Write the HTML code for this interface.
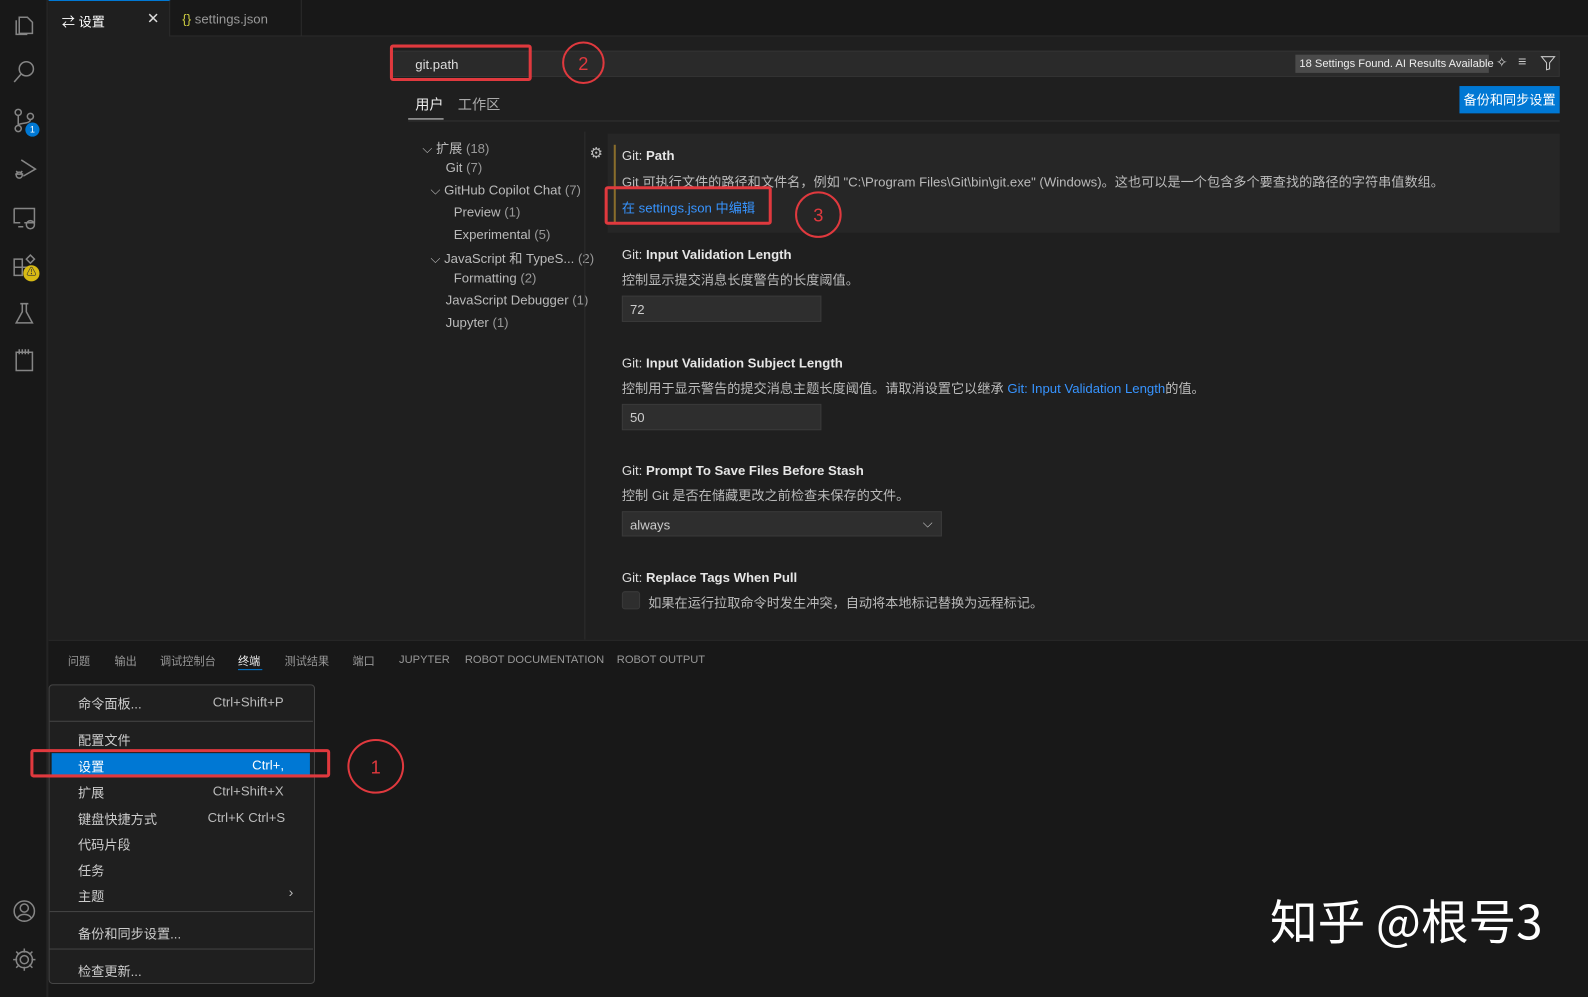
<!DOCTYPE html>
<html><head><meta charset="utf-8"><style>
*{margin:0;padding:0;box-sizing:border-box}
html,body{width:1588px;height:985px;overflow:hidden;background:#1f1f1f}
#w{position:absolute;left:0;top:0;width:1568px;height:973px;transform:scale(1.0128,1.0123);transform-origin:0 0;font-family:"Liberation Sans","Noto Sans CJK SC",sans-serif;color:#ccc;font-size:13px}
.a{position:absolute}
.t{position:absolute;white-space:nowrap}
.ico{position:absolute;left:11px;width:26px;height:26px;fill:none;stroke:#858585;stroke-width:1.5}
.red{position:absolute;border:3px solid #e0393e;border-radius:3px}
.circ{position:absolute;border:2px solid #e0393e;border-radius:50%;color:#e0393e;font-size:18px;text-align:center}
.mi{position:absolute;left:77px;font-size:13px;color:#ccc}
.ms{position:absolute;font-size:13px;color:#bbb}
.sep{position:absolute;left:49px;width:260px;height:1px;background:#454545}
.title{position:absolute;left:614px;font-size:13px;color:#ddd}
.title b{font-weight:bold;color:#e6e6e6}
.desc{position:absolute;left:614px;font-size:13px;color:#bbb}
.inp{position:absolute;left:614px;width:197px;height:26px;background:#2e2e2e;border:1px solid #3a3a3a;color:#ccc;padding:5px 7px;font-size:13px}
.toc{position:absolute;font-size:13px;color:#bbb}
.toc i{font-style:normal;color:#999}
</style></head><body><div id="w">
<div class="a" style="left:0;top:0;width:47px;height:985px;background:#181818;border-right:1px solid #2b2b2b"></div>
<svg class="ico" style="top:11px" viewBox="0 0 26 26"><path d="M8 6h8l5 5v11H8z M5 9v14h11"/></svg>
<svg class="ico" style="top:58px" viewBox="0 0 26 26"><circle cx="15" cy="10" r="7"/><path d="M10 15 3 23"/></svg>
<svg class="ico" style="top:106px" viewBox="0 0 26 26"><circle cx="7" cy="5" r="3"/><circle cx="7" cy="21" r="3"/><circle cx="19" cy="9" r="3"/><path d="M7 8v10M19 12c0 5-12 3-12 6"/></svg>
<div class="a" style="left:25px;top:121px;width:14px;height:14px;border-radius:50%;background:#0078d4;color:#fff;font-size:9px;text-align:center;line-height:14px">1</div>
<svg class="ico" style="top:154px" viewBox="0 0 26 26"><path d="M10 4 24 13 12 20M4 18h8M5 15l2 2M11 15l-2 2"/><circle cx="8" cy="19" r="3"/></svg>
<svg class="ico" style="top:202px" viewBox="0 0 26 26"><path d="M3 4h20v14H13M3 4v14h6M7 22h5"/><circle cx="19" cy="20" r="4"/></svg>
<svg class="ico" style="top:250px" viewBox="0 0 26 26"><path d="M3 6h8v8H3zM3 14h8v8H3zM11 14h8v8"/><path d="M15 6l4-4 4 4-4 4z"/></svg>
<div class="a" style="left:23px;top:262px;width:16px;height:16px;border-radius:50%;background:#d7ba14;color:#333;font-size:10px;text-align:center;line-height:16px">⚠</div>
<svg class="ico" style="top:297px" viewBox="0 0 26 26"><path d="M9 3h8M11 3v8L5 22h16L15 11V3"/></svg>
<svg class="ico" style="top:343px" viewBox="0 0 26 26"><path d="M5 5h16v18H5zM8 2v5M11 2v5M14 2v5M17 2v5"/></svg>
<svg class="ico" style="top:887px" viewBox="0 0 26 26"><circle cx="13" cy="13" r="10"/><circle cx="13" cy="10" r="4"/><path d="M6 20c3-5 11-5 14 0"/></svg>
<svg class="ico" style="top:935px" viewBox="0 0 26 26"><circle cx="13" cy="13" r="4"/><path d="M13 2v4M13 20v4M2 13h4M20 13h4M5 5l3 3M18 18l3 3M5 21l3-3M18 8l3-3"/><circle cx="13" cy="13" r="8"/></svg>
<div class="a" style="left:48px;top:0;width:1540px;height:36px;background:#181818;border-bottom:1px solid #2b2b2b"></div>
<div class="a" style="left:48px;top:0;width:120px;height:36px;background:#1f1f1f;border-top:1px solid #0078d4;border-right:1px solid #2b2b2b"></div>
<div class="t" style="left:61px;top:11px;color:#fff;font-size:13px">⇄ 设置</div>
<div class="t" style="left:145px;top:9px;color:#ddd;font-size:15px">✕</div>
<div class="a" style="left:168px;top:0;width:130px;height:36px;border-right:1px solid #2b2b2b"></div>
<div class="t" style="left:180px;top:11px;color:#999;font-size:13px"><span style="color:#cbcb41">{}</span> settings.json</div>
<div class="a" style="left:385px;top:50px;width:1155px;height:26px;background:#2a2a2a;border:1px solid #333"></div>
<div class="t" style="left:410px;top:56px;color:#ddd;font-size:13px">git.path</div>
<div class="a" style="left:1279px;top:54px;width:191px;height:18px;background:#4a4a4a"></div>
<div class="t" style="left:1283px;top:57px;color:#eee;font-size:11px">18 Settings Found. AI Results Available</div>
<div class="t" style="left:1477px;top:53px;color:#ccc;font-size:14px">✧</div>
<div class="t" style="left:1499px;top:52px;color:#ccc;font-size:14px">≡</div>
<svg class="a" style="left:1521px;top:55px" width="15" height="15" viewBox="0 0 15 15"><path d="M1 1h13L9 7v6L6 14V7z" fill="none" stroke="#ccc"/></svg>
<div class="red" style="left:385px;top:44px;width:140px;height:36px"></div>
<div class="circ" style="left:555px;top:41px;width:42px;height:42px;line-height:40px">2</div>
<div class="t" style="left:410px;top:93px;color:#eee;font-size:14px">用户</div>
<div class="t" style="left:452px;top:93px;color:#aaa;font-size:14px">工作区</div>
<div class="a" style="left:403px;top:117px;width:35px;height:1px;background:#ddd"></div>
<div class="a" style="left:403px;top:119px;width:1137px;height:1px;background:#333"></div>
<div class="a" style="left:1441px;top:85px;width:99px;height:27px;background:#0078d4;color:#fff;font-size:13px;line-height:27px;text-align:center">备份和同步设置</div>
<div class="toc" style="left:417px;top:136px">⌵ 扩展 <i>(18)</i></div>
<div class="toc" style="left:440px;top:158px">Git <i>(7)</i></div>
<div class="toc" style="left:425px;top:180px">⌵ GitHub Copilot Chat <i>(7)</i></div>
<div class="toc" style="left:448px;top:202px">Preview <i>(1)</i></div>
<div class="toc" style="left:448px;top:224px">Experimental <i>(5)</i></div>
<div class="toc" style="left:425px;top:245px">⌵ JavaScript 和 TypeS... <i>(2)</i></div>
<div class="toc" style="left:448px;top:267px">Formatting <i>(2)</i></div>
<div class="toc" style="left:440px;top:289px">JavaScript Debugger <i>(1)</i></div>
<div class="toc" style="left:440px;top:311px">Jupyter <i>(1)</i></div>
<div class="a" style="left:577px;top:130px;width:1px;height:502px;background:#2e2e2e"></div>
<div class="a" style="left:600px;top:132px;width:940px;height:98px;background:#262626"></div>
<div class="a" style="left:606px;top:143px;width:2px;height:78px;background:#8a6d2b"></div>
<div class="t" style="left:582px;top:142px;color:#bbb;font-size:15px">⚙</div>
<div class="title" style="top:146px">Git: <b>Path</b></div>
<div class="desc" style="top:169px">Git 可执行文件的路径和文件名，例如 "C:\Program Files\Git\bin\git.exe" (Windows)。这也可以是一个包含多个要查找的路径的字符串值数组。</div>
<div class="t" style="left:614px;top:195px;color:#3794ff;font-size:13px">在 settings.json 中编辑</div>
<div class="red" style="left:597px;top:184px;width:165px;height:38px"></div>
<div class="circ" style="left:785px;top:189px;width:46px;height:46px;line-height:44px">3</div>
<div class="title" style="top:244px">Git: <b>Input Validation Length</b></div>
<div class="desc" style="top:266px">控制显示提交消息长度警告的长度阈值。</div>
<div class="inp" style="top:292px">72</div>
<div class="title" style="top:351px">Git: <b>Input Validation Subject Length</b></div>
<div class="desc" style="top:373px">控制用于显示警告的提交消息主题长度阈值。请取消设置它以继承 <span style="color:#3794ff">Git: Input Validation Length</span>的值。</div>
<div class="inp" style="top:399px">50</div>
<div class="title" style="top:457px">Git: <b>Prompt To Save Files Before Stash</b></div>
<div class="desc" style="top:479px">控制 Git 是否在储藏更改之前检查未保存的文件。</div>
<div class="inp" style="top:505px;width:316px;height:25px">always<span style="position:absolute;right:8px;top:3px">⌵</span></div>
<div class="title" style="top:563px">Git: <b>Replace Tags When Pull</b></div>
<div class="a" style="left:614px;top:584px;width:18px;height:18px;background:#2e2e2e;border:1px solid #3a3a3a;border-radius:3px"></div>
<div class="desc" style="left:640px;top:585px">如果在运行拉取命令时发生冲突，自动将本地标记替换为远程标记。</div>
<div class="a" style="left:48px;top:632px;width:1540px;height:353px;background:#181818;border-top:1px solid #2b2b2b"></div>
<div class="t" style="left:67px;top:645px;font-size:11px;color:#999">问题</div>
<div class="t" style="left:113px;top:645px;font-size:11px;color:#999">输出</div>
<div class="t" style="left:158px;top:645px;font-size:11px;color:#999">调试控制台</div>
<div class="t" style="left:235px;top:645px;font-size:11px;color:#eee">终端</div>
<div class="a" style="left:235px;top:661px;width:24px;height:1px;background:#0078d4"></div>
<div class="t" style="left:281px;top:645px;font-size:11px;color:#999">测试结果</div>
<div class="t" style="left:348px;top:645px;font-size:11px;color:#999">端口</div>
<div class="t" style="left:394px;top:646px;font-size:11px;color:#999">JUPYTER</div>
<div class="t" style="left:459px;top:646px;font-size:11px;color:#999">ROBOT DOCUMENTATION</div>
<div class="t" style="left:609px;top:646px;font-size:11px;color:#999">ROBOT OUTPUT</div>
<div class="a" style="left:48px;top:676px;width:263px;height:296px;background:#1f1f1f;border:1px solid #454545;border-radius:4px"></div>
<div class="mi" style="top:685px">命令面板...</div><div class="ms" style="left:210px;top:686px">Ctrl+Shift+P</div>
<div class="sep" style="top:712px"></div>
<div class="mi" style="top:721px">配置文件</div>
<div class="a" style="left:51px;top:744px;width:255px;height:22px;background:#0078d4"></div>
<div class="mi" style="top:747px;color:#fff">设置</div><div class="ms" style="left:249px;top:748px;color:#fff">Ctrl+,</div>
<div class="red" style="left:30px;top:740px;width:296px;height:28px"></div>
<div class="circ" style="left:343px;top:730px;width:56px;height:54px;line-height:52px">1</div>
<div class="mi" style="top:773px">扩展</div><div class="ms" style="left:210px;top:774px">Ctrl+Shift+X</div>
<div class="mi" style="top:799px">键盘快捷方式</div><div class="ms" style="left:205px;top:800px">Ctrl+K Ctrl+S</div>
<div class="mi" style="top:824px">代码片段</div>
<div class="mi" style="top:850px">任务</div>
<div class="mi" style="top:875px">主题</div><div class="ms" style="left:285px;top:873px;font-size:14px">›</div>
<div class="sep" style="top:900px"></div>
<div class="mi" style="top:912px">备份和同步设置...</div>
<div class="sep" style="top:937px"></div>
<div class="mi" style="top:949px">检查更新...</div>
<div class="t" style="left:1254px;top:873px;font-size:47px;color:#fff;font-family:'Noto Sans CJK SC',sans-serif">知乎 @根号3</div>
</div></body></html>
